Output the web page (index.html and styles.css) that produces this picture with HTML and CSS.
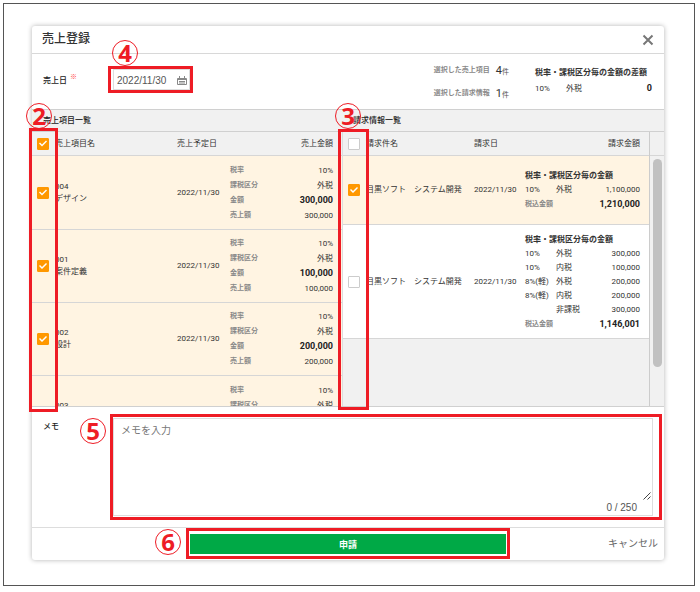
FILE: index.html
```html
<!DOCTYPE html>
<html lang="ja">
<head>
<meta charset="utf-8">
<meta name="viewport" content="width=device-width, initial-scale=1">
<title>売上登録</title>
<link rel="stylesheet" href="styles.css">
</head>
<body>
<main class="frame">
  <form class="modal">
    <header class="modal-head">
      <h1>売上登録</h1>
      <button type="button" class="close" aria-label="閉じる">
        <svg viewBox="0 0 12 12" width="12" height="12"><path d="M1.5 1.5l9 9M10.5 1.5l-9 9"/></svg>
      </button>
    </header>

    <section class="summary">
      <label class="field-label" for="sale-date">売上日<sup>※</sup></label>
      <div class="date-field">
        <input id="sale-date" type="text" value="2022/11/30">
        <svg class="calendar" viewBox="0 0 10 10" width="10" height="10"><path d="M.5 2.5h9v6h-9zM.5 3.5h9M2.5 0v3M7.5 0v3M2 5.5h6M2 7h6"/></svg>
        <span class="mark mark-date"></span>
        <span class="badge badge-date">4</span>
      </div>
      <dl class="counts">
        <dt>選択した売上項目</dt><dd>4<small>件</small></dd>
        <dt>選択した請求情報</dt><dd>1<small>件</small></dd>
      </dl>
      <div class="difference">
        <h2>税率・課税区分毎の金額の差額</h2>
        <p><span>10%</span><span>外税</span><b>0</b></p>
      </div>
    </section>

    <section class="lists">
      <div class="panel sales">
        <h2 class="panel-title">売上項目一覧</h2>
        <div class="panel-body">
          <div class="clip">
            <table>
              <colgroup><col class="c-check"><col><col class="c-date"><col class="c-detail"></colgroup>
              <thead><tr><th><input type="checkbox" checked aria-label="すべて選択"></th><th>売上項目名</th><th>売上予定日</th><th class="num">売上金額</th></tr></thead>
              <tbody>
                <tr class="on"><td><input type="checkbox" checked aria-label="デザイン"></td><td>004<br>デザイン</td><td>2022/11/30</td><td><dl class="detail"><dt>税率</dt><dd>10%</dd><dt>課税区分</dt><dd>外税</dd><dt>金額</dt><dd class="total">300,000</dd><dt>売上額</dt><dd>300,000</dd></dl></td></tr>
                <tr class="on"><td><input type="checkbox" checked aria-label="案件定義"></td><td>001<br>案件定義</td><td>2022/11/30</td><td><dl class="detail"><dt>税率</dt><dd>10%</dd><dt>課税区分</dt><dd>外税</dd><dt>金額</dt><dd class="total">100,000</dd><dt>売上額</dt><dd>100,000</dd></dl></td></tr>
                <tr class="on"><td><input type="checkbox" checked aria-label="設計"></td><td>002<br>設計</td><td>2022/11/30</td><td><dl class="detail"><dt>税率</dt><dd>10%</dd><dt>課税区分</dt><dd>外税</dd><dt>金額</dt><dd class="total">200,000</dd><dt>売上額</dt><dd>200,000</dd></dl></td></tr>
                <tr class="on"><td><input type="checkbox" checked aria-label="003"></td><td>003<br>&nbsp;</td><td></td><td class="top"><dl class="detail"><dt>税率</dt><dd>10%</dd><dt>課税区分</dt><dd>外税</dd></dl></td></tr>
              </tbody>
            </table>
          </div>
          <span class="mark mark-check"></span>
          <span class="badge badge-sales">2</span>
        </div>
      </div>

      <div class="panel bills">
        <h2 class="panel-title">請求情報一覧</h2>
        <div class="panel-body">
          <div class="clip">
            <table>
              <colgroup><col class="c-check"><col><col class="c-date"><col class="c-detail"></colgroup>
              <thead><tr><th><input type="checkbox" aria-label="すべて選択"></th><th>請求件名</th><th>請求日</th><th class="num">請求金額</th></tr></thead>
              <tbody>
                <tr class="on short"><td><input type="checkbox" checked aria-label="請求 1,210,000"></td><td>目黒ソフト　システム開発</td><td>2022/11/30</td><td>
                  <div class="tax"><h3>税率・課税区分毎の金額</h3><span>10%</span><span>外税</span><span>1,100,000</span><small>税込金額</small><b>1,210,000</b></div></td></tr>
                <tr class="tall"><td><input type="checkbox" aria-label="請求 1,146,001"></td><td>目黒ソフト　システム開発</td><td>2022/11/30</td><td>
                  <div class="tax"><h3>税率・課税区分毎の金額</h3><span>10%</span><span>外税</span><span>300,000</span><span>10%</span><span>内税</span><span>100,000</span><span>8%(軽)</span><span>外税</span><span>200,000</span><span>8%(軽)</span><span>内税</span><span>200,000</span><span></span><span>非課税</span><span>300,000</span><small>税込金額</small><b>1,146,001</b></div></td></tr>
              </tbody>
            </table>
          </div>
          <div class="rail"><div class="rail-head"></div><div class="thumb"></div></div>
          <span class="mark mark-check"></span>
          <span class="badge badge-bills">3</span>
        </div>
      </div>
    </section>

    <section class="memo">
      <label class="field-label" for="memo">メモ</label>
      <div class="memo-box">
        <textarea id="memo" placeholder="メモを入力"></textarea>
        <svg class="grip" viewBox="0 0 8 8" width="8" height="8"><path d="M.5 7.5l7-7M4.5 7.5l3-3"/></svg>
        <div class="counter">0 / 250</div>
        <span class="mark mark-memo"></span>
        <span class="badge badge-memo">5</span>
      </div>
    </section>

    <footer class="actions">
      <div class="submit-wrap">
        <button type="submit" class="submit">申請</button>
        <span class="mark mark-submit"></span>
        <span class="badge badge-submit">6</span>
      </div>
      <button type="button" class="cancel">キャンセル</button>
    </footer>
  </form>
</main>
</body>
</html>
```

FILE: styles.css
```css
* {
  box-sizing: border-box;
}

body {
  margin: 0;
  padding: 3px 5px 5px 3px;
  background: #fff;
  color: #333;
  font: 8px/14px Roboto, "Noto Sans CJK JP", sans-serif;
}

h1, h2, h3, p, dl, dd {
  margin: 0;
}

button, input, textarea {
  font-family: inherit;
  color: inherit;
}

button {
  padding: 0;
  border: 0;
  background: none;
}

.frame {
  padding: 22px 30px 25px 28px;
  border: 1px solid #555;
}

.modal {
  border-radius: 3px;
  box-shadow: 0 0 5px rgba(0, 0, 0, .3);
  background: #fff;
}

/* Header */
.modal-head {
  display: flex;
  align-items: center;
  justify-content: space-between;
  height: 28px;
  padding: 0 10px;
  border-bottom: 1px solid #d8d8d8;
}

h1 {
  font-size: 12px;
  font-weight: 500;
  line-height: 24px;
  padding-bottom: 2px;
}

.close {
  display: flex;
}

.close svg {
  fill: none;
  stroke: #777;
  stroke-width: 2;
}

/* Date and selection summary */
.summary {
  display: flex;
  align-items: flex-start;
  height: 56px;
  padding: 12px 12px 0 11px;
  border-bottom: 1px solid #d0d0d0;
}

.field-label {
  flex: none;
  width: 70px;
  font-weight: 500;
  color: #222;
}

.summary .field-label {
  padding-top: 8px;
}

sup {
  margin-left: 3px;
  font-size: 7px;
  line-height: 0;
  color: #f44;
}

.date-field {
  position: relative;
  display: flex;
  align-items: center;
  width: 77px;
  height: 21px;
  margin-top: 3px;
}

.date-field input {
  width: 100%;
  height: 21px;
  padding: 2px 3px 0;
  border: 1px solid #ddd;
  background: #fff;
  font: 10px "Liberation Sans", sans-serif;
  color: #555;
}

.calendar {
  position: absolute;
  right: 3px;
  top: 7px;
  fill: none;
  stroke: #888;
}

.counts {
  display: grid;
  grid-template-columns: auto auto;
  column-gap: 6px;
  margin-left: auto;
  line-height: 21px;
  margin-top: -6px;
}

.counts dt {
  font-size: 7px;
  font-weight: 700;
  color: #888;
}

.counts dd {
  font-size: 11px;
}

.counts small {
  font-size: 7px;
  color: #555;
}

.difference {
  width: 117px;
  margin-left: 26px;
}

.difference h2,
.tax h3 {
  font-size: 8px;
  font-weight: 700;
  white-space: nowrap;
}

.difference p {
  display: grid;
  grid-template-columns: 31px 1fr auto;
  line-height: 17px;
}

.difference b {
  font-size: 9px;
  color: #222;
}

/* Lists */
.lists {
  display: grid;
  grid-template-columns: 310fr 322fr;
  border-bottom: 1px solid #d0d0d0;
  background: #f1f1f1;
}

.panel {
  min-width: 0;
}

.panel-title {
  height: 22px;
  padding: 0 11px;
  border-bottom: 1px solid #d0d0d0;
  font-size: 8px;
  font-weight: 500;
  line-height: 21px;
  color: #222;
}

.panel-body {
  position: relative;
  display: flex;
  height: 274px;
}

.bills .panel-body {
  border-left: 1px solid #ddd;
}

.clip {
  flex: 1;
  min-width: 0;
  overflow: hidden;
}

table {
  width: 100%;
  table-layout: fixed;
  border-collapse: separate;
  border-spacing: 0;
}

.c-check {
  width: 23px;
}

.c-date {
  width: 53px;
}

.sales .c-detail {
  width: 112px;
}

.bills .c-date {
  width: 51px;
}

.bills .c-detail {
  width: 124px;
}

th, td {
  padding: 0;
  border-bottom: 1px solid #d6d6d6;
  line-height: 12px;
  text-align: left;
  vertical-align: middle;
}

th {
  height: 24px;
  font-weight: 400;
}

td {
  height: 73px;
}

tr:first-child td {
  height: 74px;
}

th:last-child, td:last-child {
  padding-right: 9px;
}

tr.short td {
  height: 69px;
}

.tall td {
  height: 114px;
  background: #fff;
}

.on td {
  background: #fff4e2;
}

td.top {
  padding-top: 7px;
  vertical-align: top;
}

.num {
  text-align: right;
}

input[type="checkbox"] {
  appearance: none;
  display: block;
  width: 12px;
  height: 12px;
  margin: 0 0 0 5px;
  border: 1px solid #ccc;
  border-radius: 1px;
  background: #fff;
}

input[type="checkbox"]:checked {
  border-color: #ff9800;
  background: #ff9800;
}

input[type="checkbox"]:checked::before {
  content: "";
  display: block;
  width: 10px;
  height: 10px;
  background: #fff;
  clip-path: polygon(10% 50%, 20% 40%, 40% 60%, 80% 20%, 90% 30%, 40% 80%);
}

.detail {
  display: grid;
  grid-template-columns: auto auto;
  justify-content: space-between;
  line-height: 15px;
}

.detail dt {
  font-size: 7px;
  font-weight: 700;
  color: #888;
}

.detail dd {
  text-align: right;
}

.detail .total,
.tax b {
  font-size: 9px;
  font-weight: 700;
  color: #222;
}

.tax {
  display: grid;
  grid-template-columns: 31px auto 1fr;
  line-height: 14px;
}

.tax h3 {
  grid-column: 1 / -1;
}

.tax span:nth-of-type(3n) {
  text-align: right;
}

.tax small {
  grid-column: 1 / 3;
  font-size: 7px;
  font-weight: 700;
  color: #888;
}

.tax b {
  text-align: right;
}

.rail {
  width: 15px;
  border-left: 1px solid #ccc;
}

.rail-head {
  height: 24px;
  border-bottom: 1px solid #d6d6d6;
}

.thumb {
  width: 9px;
  height: 208px;
  margin: 3px auto 0;
  border-radius: 5px;
  background: #c1c1c1;
}

/* Memo */
.memo {
  display: flex;
  padding: 11px;
  border-bottom: 1px solid #ddd;
}

.memo .field-label {
  padding-top: 2px;
}

.memo-box {
  position: relative;
  flex: 1;
  height: 98px;
  border: 1px solid #ddd;
}

.memo textarea {
  display: block;
  width: 100%;
  height: 82px;
  padding: 4px 7px;
  border: 0;
  outline: 0;
  resize: none;
  background: none;
  font-size: 10px;
  line-height: 16px;
}

.memo textarea::placeholder {
  color: #777;
}

.grip {
  position: absolute;
  right: 1px;
  top: 73px;
  fill: none;
  stroke: #444;
}

.counter {
  padding-right: 15px;
  font: 10px/14px "Liberation Sans", sans-serif;
  text-align: right;
  color: #555;
}

/* Footer */
.actions {
  display: grid;
  grid-template-columns: 1fr 2fr 1fr;
  align-items: center;
  height: 32px;
}

.submit-wrap {
  position: relative;
  grid-column: 2;
  height: 20px;
}

.submit {
  width: 100%;
  height: 20px;
  background: #00a946;
  color: #fff;
  font-size: 9px;
  font-weight: 700;
}

.cancel {
  justify-self: end;
  margin-right: 6px;
  font-size: 10px;
  line-height: 16px;
  color: #666;
}

/* Callouts laid over the controls */
.mark,
.badge {
  position: absolute;
  pointer-events: none;
}

.mark {
  border: 3px solid #ee1c25;
}

.badge {
  width: 26px;
  height: 26px;
  border: 1px solid #ee1c25;
  border-radius: 50%;
  font: 700 24px/24px "Noto Sans", sans-serif;
  text-align: center;
  color: #ee1c25;
}

.mark-date {
  inset: -3px -3px -3px -5px;
}

.badge-date {
  left: -1px;
  top: -29px;
}

.mark-check {
  left: -3px;
  top: -4px;
  bottom: -6px;
  width: 29px;
}

.bills .mark-check {
  left: -5px;
  top: -3px;
  bottom: -4px;
  width: 31px;
}

.badge-sales {
  left: -6px;
  top: -29px;
}

.badge-bills {
  left: -8px;
  top: -29px;
}

.mark-memo {
  inset: -5px -10px -5px -4px;
}

.badge-memo {
  left: -34px;
  top: -1px;
}

.mark-submit {
  inset: -6px -4px -5px -4px;
}

.badge-submit {
  left: -35px;
  top: -5px;
}
```
